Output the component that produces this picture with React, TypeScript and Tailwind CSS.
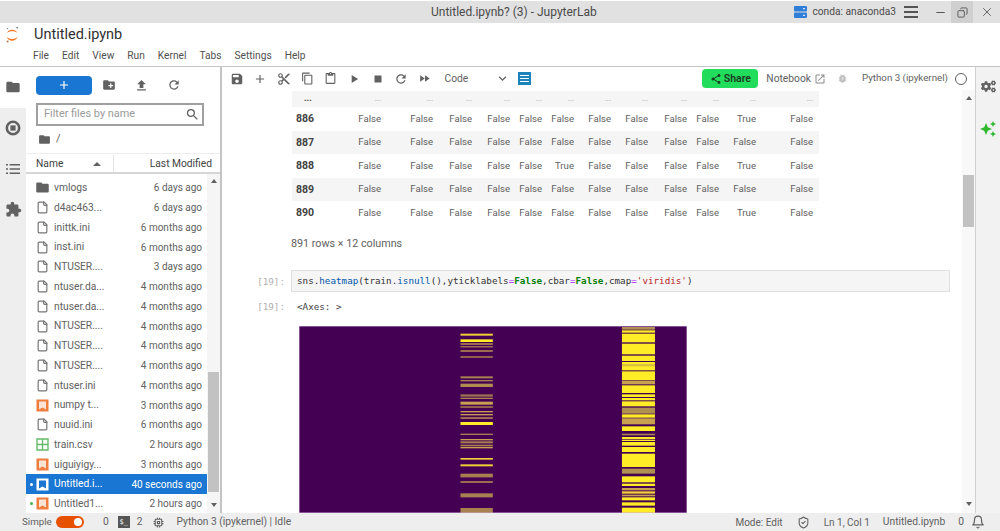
import { FaCogs } from "react-icons/fa";
import {
  MdAdd,
  MdBugReport,
  MdContentCopy,
  MdContentCut,
  MdContentPaste,
  MdCreateNewFolder,
  MdExtension,
  MdFastForward,
  MdFileUpload,
  MdFolder,
  MdKeyboardArrowDown,
  MdMemory,
  MdOpenInNew,
  MdPlayArrow,
  MdRefresh,
  MdSave,
  MdSearch,
  MdShare,
  MdStop,
} from "react-icons/md";
import { LuBell, LuCopy, LuFile, LuMinus, LuShieldCheck, LuX } from "react-icons/lu";

type FileRow = { name: string; time: string; kind: "folder" | "file" | "nb" | "csv" | "active"; dot?: string };

const files: FileRow[] = [
  { name: "vmlogs", time: "6 days ago", kind: "folder" },
  { name: "d4ac463...", time: "6 days ago", kind: "file" },
  { name: "inittk.ini", time: "6 months ago", kind: "file" },
  { name: "inst.ini", time: "6 months ago", kind: "file" },
  { name: "NTUSER....", time: "3 days ago", kind: "file" },
  { name: "ntuser.da...", time: "4 months ago", kind: "file" },
  { name: "ntuser.da...", time: "4 months ago", kind: "file" },
  { name: "NTUSER....", time: "4 months ago", kind: "file" },
  { name: "NTUSER....", time: "4 months ago", kind: "file" },
  { name: "NTUSER....", time: "4 months ago", kind: "file" },
  { name: "ntuser.ini", time: "4 months ago", kind: "file" },
  { name: "numpy t...", time: "3 months ago", kind: "nb" },
  { name: "nuuid.ini", time: "6 months ago", kind: "file" },
  { name: "train.csv", time: "2 hours ago", kind: "csv" },
  { name: "uiguiyigy...", time: "3 months ago", kind: "nb" },
  { name: "Untitled.i...", time: "40 seconds ago", kind: "active", dot: "bg-white" },
  { name: "Untitled1...", time: "2 hours ago", kind: "nb", dot: "bg-[#4caf50]" },
];

const colWidths = "grid-cols-[35px_60px_52px_39px_38px_32px_32px_37px_37px_39px_32px_37px_57px]";

const rows: { idx: string; trueAt: number[] }[] = [
  { idx: "886", trueAt: [10] },
  { idx: "887", trueAt: [] },
  { idx: "888", trueAt: [5, 10] },
  { idx: "889", trueAt: [] },
  { idx: "890", trueAt: [10] },
];

// y ranges read off the heatmap, in 3x crop coordinates
const nameBars: [number, number, string][] = [
  [40, 6, "#f2cf3a"], [57, 8, "#fdec26"], [69, 4, "#c9a050"], [78, 3, "#c9a050"], [90, 4, "#c9a050"], [108, 4, "#b98c50"],
  [168, 6, "#a9804f"], [179, 4, "#a9804f"], [190, 10, "#b08c50"], [222, 7, "#9a7050"], [232, 4, "#a9804f"],
  [244, 9, "#c9a050"], [258, 4, "#b98c50"], [272, 4, "#c9a050"], [281, 4, "#c9a050"], [291, 4, "#c9a050"],
  [305, 9, "#fdec26"], [340, 4, "#a9804f"], [356, 4, "#c9a050"], [363, 6, "#a9804f"], [373, 5, "#a9804f"], [380, 4, "#c9a050"],
  [413, 5, "#f2cf3a"], [432, 6, "#f2cf3a"], [460, 9, "#a9804f"], [468, 3, "#b98c50"], [483, 4, "#c9a050"],
  [519, 12, "#a9804f"], [563, 15, "#a9804f"],
];

const cabinBars: [number, number, string][] = [
  [20, 8, "#b09050"], [30, 7, "#fdec26"], [40, 26, "#fdec26"], [70, 32, "#fdec26"], [106, 16, "#fdec26"],
  [125, 25, "#fdec26"], [131, 7, "#d8c040"], [153, 27, "#fdec26"], [182, 10, "#c9a050"], [195, 23, "#fdec26"],
  [222, 8, "#fdec26"], [233, 7, "#fdec26"], [243, 15, "#fdec26"], [262, 18, "#b09050"], [282, 10, "#fdec26"],
  [294, 18, "#c9a050"], [318, 14, "#fdec26"], [340, 5, "#a9804f"], [350, 6, "#fdec26"], [358, 4, "#fdec26"],
  [365, 11, "#fdec26"], [380, 15, "#fdec26"], [400, 40, "#fdec26"], [445, 15, "#b09050"], [468, 18, "#fdec26"],
  [490, 7, "#fdec26"], [503, 7, "#c9a050"], [513, 7, "#f2cf3a"], [523, 5, "#c9a050"], [531, 9, "#fdec26"],
  [546, 10, "#fdec26"], [562, 16, "#fdec26"],
];

function NotebookIcon({ color, inner }: { color: string; inner: string }) {
  return (
    <svg width="13" height="13" viewBox="0 0 13 13" className="shrink-0">
      <rect x="0.5" y="0.5" width="12" height="12" fill={color} />
      <path d="M3 2.5h7v8L6.5 8.4 3 10.5z" fill={inner} />
    </svg>
  );
}

function FileIcon({ kind }: { kind: FileRow["kind"] }) {
  if (kind === "folder") return <MdFolder className="shrink-0 text-[#616161] w-[15px] h-[15px] -ml-px -mr-px" />;
  if (kind === "file") return <LuFile className="shrink-0 text-[#757575] w-[13px] h-[13px]" strokeWidth={2.2} />;
  if (kind === "nb") return <NotebookIcon color="#ef7d3e" inner="#fbe3d5" />;
  if (kind === "active") return <NotebookIcon color="#ffffff" inner="#1976d2" />;
  return (
    <svg width="13" height="13" viewBox="0 0 13 13" className="shrink-0">
      <path d="M1 1h11v11H1zM6.5 1v11M1 6.5h11" fill="none" stroke="#66bb6a" strokeWidth="1.4" />
    </svg>
  );
}

function ToolIcon({ children }: { children: React.ReactNode }) {
  return <div className="w-[23.5px] flex justify-center text-[#616161] shrink-0">{children}</div>;
}

function FileBrowser() {
  return (
    <div className="w-[196px] shrink-0 flex flex-col border-r-2 border-[#c4c4c4] bg-white">
      <div className="h-[36px] flex items-center pl-[10px] shrink-0">
        <div className="w-[56px] h-[19px] rounded-sm bg-[#1976d2] flex items-center justify-center">
          <MdAdd className="text-white w-[14px] h-[14px]" />
        </div>
        <MdCreateNewFolder className="text-[#616161] w-[14px] h-[14px] ml-[10px]" />
        <MdFileUpload className="text-[#616161] w-[15px] h-[15px] ml-[18px]" />
        <MdRefresh className="text-[#616161] w-[14px] h-[14px] ml-[18px]" />
      </div>
      <div className="ml-[10px] w-[168px] h-[23px] border-2 border-[#a0a0a0] flex items-center pl-[6px] pr-[2px] shrink-0">
        <span className="text-[10.9px] text-[#9a9a9a] flex-1">Filter files by name</span>
        <MdSearch className="text-[#616161] w-[15px] h-[15px]" />
      </div>
      <div className="h-[27px] flex items-center pl-[12px] gap-[5px] text-[#616161] shrink-0">
        <MdFolder className="w-[13px] h-[13px]" />
        <span className="text-[11px]">/</span>
      </div>
      <div className="h-[21px] pt-px flex items-center border-t border-[#eeeeee] border-b-2 border-b-[#d6d6d6] shrink-0 text-[10.25px] text-[#424242]">
        <div className="w-[88px] h-full flex items-center justify-between pl-[10px] pr-[12px] border-r border-[#e4e4e4]">
          <span>Name</span>
          <span className="w-0 h-0 border-l-[4px] border-r-[4px] border-b-[4px] border-l-transparent border-r-transparent border-b-[#616161]" />
        </div>
        <div className="flex-1 text-right pr-[8px]">Last Modified</div>
      </div>
      <div className="flex-1 min-h-0 flex">
        <div className="w-[182px] pt-[4px] overflow-hidden">
          {files.map((f, i) => (
            <div
              key={i}
              className={`h-[19.76px] flex items-center relative pl-[10px] pr-[5px] text-[10.25px] ${
                f.kind === "active" ? "bg-[#1976d2] text-white" : "text-[#616161]"
              }`}
            >
              {f.dot && <span className={`absolute left-[4px] w-[3px] h-[3px] rounded-full ${f.dot}`} />}
              <FileIcon kind={f.kind} />
              <span className="ml-[5px] flex-1">{f.name}</span>
              <span className="text-[10px]">{f.time}</span>
            </div>
          ))}
        </div>
        <div className="w-[13px] flex flex-col items-center bg-[#f5f5f5]">
          <span className="mt-[5px] w-0 h-0 border-l-[3px] border-r-[3px] border-b-[4px] border-l-transparent border-r-transparent border-b-[#616161]" />
          <div className="mt-[189px] w-[11px] h-[120px] bg-[#c2c2c2]" />
          <span className="mt-[11px] w-0 h-0 border-l-[3px] border-r-[3px] border-t-[4px] border-l-transparent border-r-transparent border-t-[#616161]" />
        </div>
      </div>
    </div>
  );
}

function NotebookToolbar() {
  return (
    <div className="h-[23px] flex items-center pl-[3px] pr-[4px] shrink-0">
      <ToolIcon><MdSave className="w-[14px] h-[14px]" /></ToolIcon>
      <ToolIcon><MdAdd className="w-[14px] h-[14px]" /></ToolIcon>
      <ToolIcon><MdContentCut className="w-[14px] h-[14px]" /></ToolIcon>
      <ToolIcon><MdContentCopy className="w-[13px] h-[13px]" /></ToolIcon>
      <ToolIcon><MdContentPaste className="w-[13px] h-[13px]" /></ToolIcon>
      <ToolIcon><MdPlayArrow className="w-[14px] h-[14px]" /></ToolIcon>
      <ToolIcon><MdStop className="w-[14px] h-[14px]" /></ToolIcon>
      <ToolIcon><MdRefresh className="w-[14px] h-[14px]" /></ToolIcon>
      <ToolIcon><MdFastForward className="w-[13px] h-[13px]" /></ToolIcon>
      <span className="ml-[8px] text-[10.25px] text-[#616161] w-[50px]">Code</span>
      <MdKeyboardArrowDown className="text-[#616161] w-[15px] h-[15px]" />
      <div className="ml-[8px] w-[13px] h-[13px] bg-[#1c84b8] flex flex-col justify-center gap-[2px] px-[2px]">
        <span className="h-px bg-white" />
        <span className="h-px bg-white" />
        <span className="h-px bg-white" />
      </div>
      <div className="ml-auto w-[56px] h-[19px] rounded-sm bg-[#22dd5c] flex items-center justify-center gap-[2px] text-[10.5px] font-semibold text-[#1c3a24]">
        <MdShare className="w-[12px] h-[12px]" />
        Share
      </div>
      <span className="ml-[8px] text-[10.25px] text-[#616161]">Notebook</span>
      <MdOpenInNew className="ml-[3px] text-[#8a8a8a] w-[12px] h-[12px]" />
      <MdBugReport className="ml-[11px] text-[#bdbdbd] w-[11px] h-[11px]" />
      <span className="ml-[14px] text-[9.75px] text-[#616161]">Python 3 (ipykernel)</span>
      <span className="ml-[7px] w-[12px] h-[12px] rounded-full border border-[#616161]" />
      <span className="w-[4px]" />
    </div>
  );
}

function DataTable() {
  return (
    <div className="ml-px w-[527px] text-[9.6px] text-[#616161]">
      <div className={`grid ${colWidths} h-[16px] items-center bg-[#f5f5f5]`}>
        <div className="font-bold text-[#424242] pl-[12px] text-[9px]">...</div>
        {Array.from({ length: 12 }).map((_, c) => (
          <div key={c} className="text-right pr-[6px] text-[8px] text-[#9a9a9a]">...</div>
        ))}
      </div>
      {rows.map((r, i) => (
        <div key={r.idx} className={`grid ${colWidths} h-[23.6px] items-center ${i % 2 === 1 ? "bg-[#f5f5f5]" : ""}`}>
          <div className="font-bold text-[10.5px] text-[#424242] pl-[4px]">{r.idx}</div>
          {Array.from({ length: 12 }).map((_, c) => (
            <div key={c} className="text-right pr-[6px]">{r.trueAt.includes(c) ? "True" : "False"}</div>
          ))}
        </div>
      ))}
    </div>
  );
}

function Heatmap() {
  return (
    <svg width="388" height="187" viewBox="27 17 1163 561" preserveAspectRatio="none" className="block shrink-0">
      <rect x="27" y="17" width="1163" height="561" fill="#440154" />
      {nameBars.map(([y, h, fill], i) => (
        <rect key={i} x="511" y={y} width="97" height={h} fill={fill} />
      ))}
      {cabinBars.map(([y, h, fill], i) => (
        <rect key={i} x="995" y={y} width="99" height={h} fill={fill} />
      ))}
      <rect x="27" y="17" width="1163" height="561" fill="none" stroke="#c9a5d6" strokeWidth="3" />
    </svg>
  );
}

function Notebook() {
  const prompt = "w-[69px] shrink-0 text-right pr-[6px] text-[#b0b0b0]";
  return (
    <div className="flex-1 min-w-0 flex flex-col bg-white">
      <NotebookToolbar />
      <div className="flex-1 min-h-0 flex">
        <div className="flex-1 min-w-0 overflow-hidden pt-px font-['DejaVu_Sans_Mono',monospace]">
          <div className="pl-[69px] font-['Roboto',sans-serif]">
            <DataTable />
            <div className="h-[27px] flex items-end text-[10.75px] text-[#616161]">891 rows × 12 columns</div>
          </div>
          <div className="mt-[18px] flex items-stretch text-[9.25px]">
            <div className={`${prompt} pt-[5px]`}>[19]:</div>
            <div className="w-[659px] h-[22px] bg-[#f5f5f5] border border-[#e0e0e0] flex items-center pl-[5px] text-[#333333] whitespace-pre">
              <span>sns.</span>
              <span className="text-[#0055aa]">heatmap</span>
              <span>(train.</span>
              <span className="text-[#0055aa]">isnull</span>
              <span>(),yticklabels</span>
              <span className="text-[#aa22ff]">=</span>
              <span className="text-[#008000] font-bold">False</span>
              <span>,cbar</span>
              <span className="text-[#aa22ff]">=</span>
              <span className="text-[#008000] font-bold">False</span>
              <span>,cmap</span>
              <span className="text-[#aa22ff]">=</span>
              <span className="text-[#ba2121]">'viridis'</span>
              <span>)</span>
            </div>
          </div>
          <div className="mt-[8px] flex text-[9.25px] items-center h-[14px]">
            <div className={prompt}>[19]:</div>
            <div className="pl-[6px] text-[#424242]">&lt;Axes: &gt;</div>
          </div>
          <div className="mt-[12px] pl-[77px]">
            <Heatmap />
          </div>
        </div>
        <div className="w-[13px] shrink-0 flex flex-col items-center bg-[#f8f8f8]">
          <span className="mt-[6px] w-0 h-0 border-l-[3px] border-r-[3px] border-b-[4px] border-l-transparent border-r-transparent border-b-[#616161]" />
          <div className="mt-[75px] w-[11px] h-[52px] bg-[#c2c2c2]" />
          <span className="mt-[275px] w-0 h-0 border-l-[3px] border-r-[3px] border-t-[4px] border-l-transparent border-r-transparent border-t-[#616161]" />
        </div>
      </div>
    </div>
  );
}

function JupyterLogo() {
  return (
    <svg width="15" height="19" viewBox="0 0 15 19">
      <path d="M2 8C3 3.5 11 3.5 12.5 8 10.5 5.8 4 5.8 2 8z" fill="#f37726" />
      <path d="M2 12C3 17 11 17 12.5 12 10.5 14.5 4 14.5 2 12z" fill="#f37726" />
      <circle cx="12.2" cy="2.6" r="0.9" fill="#767677" />
      <circle cx="2.6" cy="3.6" r="0.7" fill="#767677" />
      <circle cx="2.6" cy="16.6" r="1" fill="#c0734a" />
    </svg>
  );
}

function Sparkles() {
  return (
    <svg width="18" height="18" viewBox="0 0 18 18">
      <path d="M7 3 8.8 7.2 13 9 8.8 10.8 7 15 5.2 10.8 1 9 5.2 7.2z" fill="#2eb82e" />
      <path d="M14 1 14.9 3.1 17 4 14.9 4.9 14 7 13.1 4.9 11 4 13.1 3.1z" fill="#2eb82e" />
      <path d="M14 11 14.9 13.1 17 14 14.9 14.9 14 17 13.1 14.9 11 14 13.1 13.1z" fill="#2eb82e" />
    </svg>
  );
}

export default function App() {
  return (
    <div className="w-[1000px] h-[531px] flex flex-col overflow-hidden bg-white font-['Roboto',sans-serif]">
      {/* Title bar */}
      <div className="mt-px h-[22px] shrink-0 bg-[#e1e1e1] flex items-center text-[10.5px] text-[#4a4a4a]">
        <div className="w-[431px]" />
        <span className="text-[12px]">Untitled.ipynb? (3) - JupyterLab</span>
        <div className="ml-auto flex items-center h-full">
          <svg width="13" height="12" viewBox="0 0 13 12">
            <rect x="0" y="0" width="13" height="5.4" rx="1" fill="#2f7ed8" />
            <rect x="0" y="6.6" width="13" height="5.4" rx="1" fill="#2f7ed8" />
            <rect x="9" y="2.2" width="2" height="1" fill="#ffffff" />
            <rect x="9" y="8.8" width="2" height="1" fill="#ffffff" />
          </svg>
          <span className="ml-[5px] text-[10.2px]">conda: anaconda3</span>
          <div className="ml-[8px] w-[14px] flex flex-col gap-[3px]">
            <span className="h-[2px] bg-[#555555]" />
            <span className="h-[2px] bg-[#555555]" />
            <span className="h-[2px] bg-[#555555]" />
          </div>
          <div className="ml-[11px] w-[22px] flex justify-center">
            <LuMinus className="w-[13px] h-[13px] text-[#555555]" />
          </div>
          <div className="w-[22px] h-full bg-[#d0d0d0] flex items-center justify-center">
            <LuCopy className="w-[11px] h-[11px] text-[#555555] -scale-x-100" />
          </div>
          <div className="w-[27px] flex justify-center">
            <LuX className="w-[14px] h-[14px] text-[#555555]" strokeWidth={1.5} />
          </div>
        </div>
      </div>

      {/* Logo + menu */}
      <div className="h-[44px] shrink-0 border-b border-[#c4c4c4] flex flex-col">
        <div className="h-[23px] flex items-center pl-[5px]">
          <JupyterLogo />
          <span className="ml-[14px] text-[14.5px] text-[#303030]">Untitled.ipynb</span>
        </div>
        <div className="flex-1 flex items-center pl-[33px] gap-[13px] text-[10.2px] text-[#505050]">
          <span>File</span>
          <span>Edit</span>
          <span>View</span>
          <span>Run</span>
          <span>Kernel</span>
          <span>Tabs</span>
          <span>Settings</span>
          <span>Help</span>
        </div>
      </div>

      {/* Main area */}
      <div className="flex-1 min-h-0 flex">
        <div className="w-[26px] shrink-0 flex flex-col items-stretch bg-[#eeeeee] text-[#616161]">
          <div className="h-[41px] pb-[2px] bg-white flex items-center justify-center"><MdFolder className="w-[16px] h-[16px]" /></div>
          <div className="h-[41px] pb-[2px] flex items-center justify-center">
            <svg width="16" height="16" viewBox="0 0 16 16">
              <circle cx="8" cy="8" r="6.2" fill="none" stroke="#616161" strokeWidth="2.6" />
              <rect x="5.4" y="5.4" width="5.2" height="5.2" fill="#616161" />
            </svg>
          </div>
          <div className="h-[41px] pb-[2px] flex items-center justify-center">
            <svg width="14" height="12" viewBox="0 0 14 12">
              <path d="M0 1h2v1.4H0zM0 5.3h2v1.4H0zM0 9.6h2V11H0zM3.6 1H14v1.4H3.6zM3.6 5.3H14v1.4H3.6zM3.6 9.6H14V11H3.6z" fill="#616161" />
            </svg>
          </div>
          <div className="h-[41px] pb-[2px] flex items-center justify-center"><MdExtension className="w-[17px] h-[17px]" /></div>
        </div>
        <FileBrowser />
        <Notebook />
        <div className="w-[25px] shrink-0 border-l border-[#d0d0d0] bg-[#f2f2f2] flex flex-col">
          <div className="h-[41px] pb-[2px] flex items-center justify-center"><FaCogs className="w-[15px] h-[15px] text-[#616161]" /></div>
          <div className="h-[41px] flex items-center justify-center"><Sparkles /></div>
        </div>
      </div>

      {/* Status bar */}
      <div className="h-[18px] shrink-0 bg-[#eeeeee] flex items-center text-[10.25px] text-[#616161] pl-[22px]">
        <span className="w-[30px] text-[9.75px]">Simple</span>
        <div className="ml-[4px] w-[28px] h-[12px] rounded-full bg-[#e65100] flex items-center justify-end pr-[2px]">
          <span className="w-[8px] h-[8px] rounded-full bg-white" />
        </div>
        <span className="ml-[19px]">0</span>
        <div className="ml-[9px] w-[12px] h-[12px] bg-[#555555] text-white text-[7px] leading-[12px] text-center font-['DejaVu_Sans_Mono',monospace]">$_</div>
        <span className="ml-[7px]">2</span>
        <MdMemory className="ml-[9px] w-[13px] h-[13px]" />
        <span className="ml-[12px]">Python 3 (ipykernel) | Idle</span>
        <span className="ml-auto text-[10px]">Mode: Edit</span>
        <LuShieldCheck className="ml-[14px] w-[13px] h-[13px]" />
        <span className="ml-[14px] text-[10px]">Ln 1, Col 1</span>
        <span className="ml-[13px]">Untitled.ipynb</span>
        <span className="ml-[13px]">0</span>
        <LuBell className="ml-[7px] mr-[15px] w-[14px] h-[14px]" />
      </div>
    </div>
  );
}
